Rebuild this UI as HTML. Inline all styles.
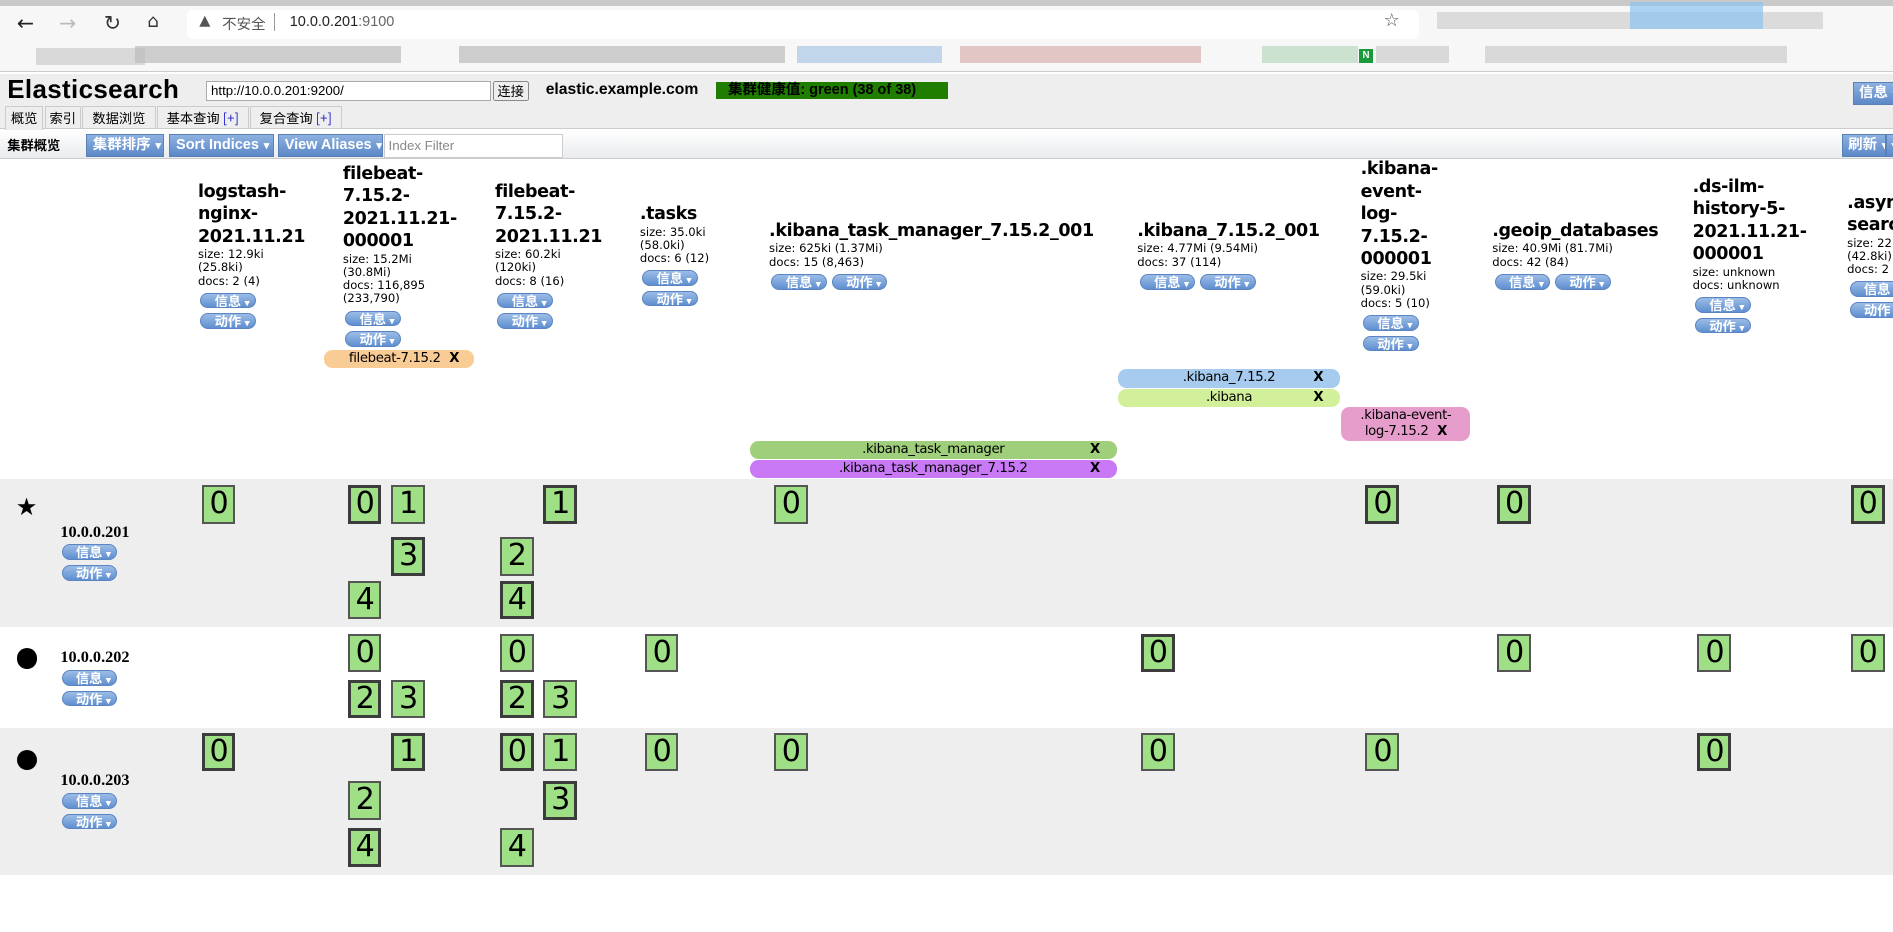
<!DOCTYPE html>
<html><head><meta charset="utf-8">
<style>
*{box-sizing:border-box;margin:0;padding:0}
html,body{width:1893px;height:932px;overflow:hidden;background:#fff}
#w{zoom:1.2073;width:1568px;height:772px;position:relative;font-family:"DejaVu Sans","Noto Sans CJK SC",sans-serif;color:#000}
.a{position:absolute}
.cjk{font-family:"Noto Sans CJK SC","WenQuanYi Zen Hei",sans-serif}
.pill{display:block;flex-shrink:0;width:46px;height:13px;border-radius:7px;background:linear-gradient(#9cbce6,#5f8fd0);border:1px solid #5a84c2;color:#fff;font:bold 11px/11px "Noto Sans CJK SC",sans-serif;padding-left:11px;margin:4px 0 0 2px;white-space:nowrap;overflow:hidden}
.pill:after{content:"▾";font-size:8px;margin-left:3px}
.tb{position:absolute;top:111px;height:19px;background:linear-gradient(#8eb1e0,#5b88c7);border:1px solid #5a80b8;color:#fff;font:bold 12px/17px "Liberation Sans","Noto Sans CJK SC",sans-serif;padding:0 5px;white-space:nowrap;overflow:hidden}
.tb:after{content:"▾";font-size:9px;margin-left:4px}
.col{position:absolute;top:132px;height:158px;display:flex;flex-direction:column;justify-content:center;white-space:nowrap}
.col>*{flex-shrink:0}
.col h2{font:bold 14.5px/18.6px "DejaVu Sans",sans-serif;letter-spacing:-0.3px}
.col p{font:9.6px/11px "DejaVu Sans",sans-serif}
.row2{display:flex;gap:2px}
.row2 .pill{margin-left:2px}
.al{position:absolute;height:15px;border-radius:7px;font:11px/15px "DejaVu Sans",sans-serif;text-align:center;letter-spacing:-0.3px}
.al b{position:absolute;right:14px;top:0;font-weight:bold}
.s{position:absolute;width:28px;height:32px;background:#9fdf86;border:2px solid #555;font:25px/28px "DejaVu Sans",sans-serif;text-align:center;letter-spacing:-1px}
.p{border:3px solid #3c3c3c;line-height:26px}
.node{position:absolute;left:50px;font:bold 13.5px "Liberation Serif",serif}
.blur{position:absolute;height:14px;background:#ccc;opacity:.7}
.tab{position:absolute;top:88px;height:19px;border:1px solid #ccc;font:11px/18px "Noto Sans CJK SC",sans-serif;text-align:center}
</style></head><body><div id="w">
<div class="a" style="left:0;top:0;width:1568px;height:5px;background:#c9c9c9"></div>
<div class="a" style="left:0;top:5px;width:1568px;height:55px;background:#f7f7f7;border-bottom:1px solid #ccc"></div>
<div class="a" style="left:155px;top:8px;width:1020px;height:24px;background:#fff;border-radius:5px"></div>
<div class="a" style="left:14px;top:9px;font-size:17px;color:#222">←</div>
<div class="a" style="left:49px;top:9px;font-size:17px;color:#bbb">→</div>
<div class="a" style="left:86px;top:9px;font-size:17px;color:#333">↻</div>
<div class="a" style="left:122px;top:9px;font-size:15px;color:#333">⌂</div>
<div class="a" style="left:165px;top:11px;font-size:12px;color:#555">▲</div>
<div class="a cjk" style="left:184px;top:11px;font-size:12px;color:#555">不安全</div>
<div class="a" style="left:227px;top:11px;width:1px;height:15px;background:#999"></div>
<div class="a" style="left:240px;top:12px;font:12px 'Liberation Sans',sans-serif;color:#222">10.0.0.201<span style="color:#666">:9100</span></div>
<div class="a" style="left:1146px;top:8px;font-size:15px;color:#555">☆</div>
<div class="blur" style="left:30px;top:40px;width:90px"></div>
<div class="blur" style="left:112px;top:38px;width:220px;background:#bbb"></div>
<div class="blur" style="left:380px;top:38px;width:270px;background:#bbb"></div>
<div class="blur" style="left:660px;top:38px;width:120px;background:#aac6e6"></div>
<div class="blur" style="left:795px;top:38px;width:200px;background:#d8b0b0"></div>
<div class="blur" style="left:1045px;top:38px;width:80px;background:#b8d8c0"></div>
<div class="a" style="left:1126px;top:41px;width:11px;height:11px;background:#1a9a3a;color:#fff;font:bold 8px/11px sans-serif;text-align:center">N</div>
<div class="blur" style="left:1140px;top:38px;width:60px"></div>
<div class="blur" style="left:1230px;top:38px;width:250px"></div>
<div class="blur" style="left:1190px;top:10px;width:320px;background:#cfcfcf"></div>
<div class="blur" style="left:1350px;top:2px;width:110px;height:22px;background:#8cc4f0"></div>
<div class="a" style="left:0;top:61px;width:1568px;height:46px;background:#eee;border-bottom:1px solid #ccc"></div>
<div class="a" style="left:6px;top:63px;font:bold 21.5px 'Liberation Sans',sans-serif;letter-spacing:0.3px">Elasticsearch</div>
<div class="a" style="left:171px;top:67px;width:236px;height:17px;background:#fff;border:1px solid #aaa;font:11px/15px 'Liberation Sans',sans-serif;padding-left:3px">http://10.0.0.201:9200/</div>
<div class="a cjk" style="left:408px;top:67px;width:30px;height:17px;background:#eee;border:1px solid #888;border-radius:2px;font-size:11px;line-height:15px;text-align:center">连接</div>
<div class="a" style="left:452px;top:67px;font:bold 13px 'Liberation Sans',sans-serif">elastic.example.com</div>
<div class="a" style="left:593px;top:68px;width:192px;height:14px;background:#1f7d00;font:bold 12px/14px 'Liberation Sans','Noto Sans CJK SC',sans-serif;padding-left:10px;white-space:nowrap">集群健康值: green (38 of 38)</div>
<div class="tb" style="left:1535px;top:68px;width:40px;padding:0 4px">信息</div>
<div class="tab" style="left:4px;width:32px;height:20px;background:#eee;border-bottom:none">概览</div>
<div class="tab" style="left:37px;width:30px">索引</div>
<div class="tab" style="left:68px;width:61px">数据浏览</div>
<div class="tab" style="left:130px;width:76px">基本查询 <span style="color:#22c">[+]</span></div>
<div class="tab" style="left:207px;width:76px">复合查询 <span style="color:#22c">[+]</span></div>
<div class="a" style="left:0;top:108px;width:1568px;height:24px;background:linear-gradient(#fff,#e9ebee);border-bottom:1px solid #ccc"></div>
<div class="a cjk" style="left:6px;top:112px;font-weight:bold;font-size:11px">集群概览</div>
<div class="tb" style="left:71px;width:65px">集群排序</div>
<div class="tb" style="left:140px;width:87px">Sort Indices</div>
<div class="tb" style="left:230px;width:87px">View Aliases</div>
<div class="a" style="left:318px;top:111px;width:148px;height:20px;background:#fff;border:1px solid #ccc;font:11px/18px 'Liberation Sans',sans-serif;color:#888;padding-left:3px">Index Filter</div>
<div class="tb" style="left:1526px;width:36px;padding:0 4px">刷新</div>
<div class="tb" style="left:1562px;width:10px;padding:0"></div>
<div class="col" style="left:164px"><h2>logstash-<br>nginx-<br>2021.11.21</h2><p>size: 12.9ki<br>(25.8ki)<br>docs: 2 (4)</p><span class="pill">信息</span><span class="pill">动作</span></div>
<div class="col" style="left:284px"><h2>filebeat-<br>7.15.2-<br>2021.11.21-<br>000001</h2><p>size: 15.2Mi<br>(30.8Mi)<br>docs: 116,895<br>(233,790)</p><span class="pill">信息</span><span class="pill">动作</span></div>
<div class="col" style="left:410px"><h2>filebeat-<br>7.15.2-<br>2021.11.21</h2><p>size: 60.2ki<br>(120ki)<br>docs: 8 (16)</p><span class="pill">信息</span><span class="pill">动作</span></div>
<div class="col" style="left:530px"><h2>.tasks</h2><p>size: 35.0ki<br>(58.0ki)<br>docs: 6 (12)</p><span class="pill">信息</span><span class="pill">动作</span></div>
<div class="col" style="left:637px"><h2>.kibana_task_manager_7.15.2_001</h2><p>size: 625ki (1.37Mi)<br>docs: 15 (8,463)</p><div class="row2"><span class="pill">信息</span><span class="pill">动作</span></div></div>
<div class="col" style="left:942px"><h2>.kibana_7.15.2_001</h2><p>size: 4.77Mi (9.54Mi)<br>docs: 37 (114)</p><div class="row2"><span class="pill">信息</span><span class="pill">动作</span></div></div>
<div class="col" style="left:1127px"><h2>.kibana-<br>event-<br>log-<br>7.15.2-<br>000001</h2><p>size: 29.5ki<br>(59.0ki)<br>docs: 5 (10)</p><span class="pill">信息</span><span class="pill">动作</span></div>
<div class="col" style="left:1236px"><h2>.geoip_databases</h2><p>size: 40.9Mi (81.7Mi)<br>docs: 42 (84)</p><div class="row2"><span class="pill">信息</span><span class="pill">动作</span></div></div>
<div class="col" style="left:1402px"><h2>.ds-ilm-<br>history-5-<br>2021.11.21-<br>000001</h2><p>size: unknown<br>docs: unknown</p><span class="pill">信息</span><span class="pill">动作</span></div>
<div class="col" style="left:1530px"><h2>.async-<br>search</h2><p>size: 22<br>(42.8ki)<br>docs: 2</p><span class="pill">信息</span><span class="pill">动作</span></div>
<div class="al" style="left:268px;top:290px;width:125px;background:#f9cc96;text-align:left;padding-left:21px">filebeat-7.15.2 <b style="position:static;margin-left:4px">X</b></div>
<div class="al" style="left:926px;top:306px;width:184px;background:#a6cbef">.kibana_7.15.2<b>X</b></div>
<div class="al" style="left:926px;top:322px;width:184px;background:#d2ef9a">.kibana<b>X</b></div>
<div class="al" style="left:1111px;top:337px;width:107px;height:28px;background:#e79dcb;line-height:13px;padding-top:1px">.kibana-event-<br>log-7.15.2 <b style="position:static;margin-left:4px">X</b></div>
<div class="al" style="left:621px;top:365px;width:304px;background:#9fcf7a">.kibana_task_manager<b>X</b></div>
<div class="al" style="left:621px;top:381px;width:304px;background:#c979f6">.kibana_task_manager_7.15.2<b>X</b></div>
<div class="a" style="left:0;top:397px;width:1568px;height:122px;background:#eee"></div>
<div class="a" style="left:0;top:603px;width:1568px;height:122px;background:#eee"></div>
<div class="a" style="left:13px;top:408px;font-size:20px">★</div>
<div class="node" style="top:432px">10.0.0.201</div>
<div class="a" style="left:49px;top:447px"><span class="pill">信息</span><span class="pill">动作</span></div>
<div class="a" style="left:14px;top:537px;width:17px;height:17px;border-radius:50%;background:#000"></div>
<div class="node" style="top:536px">10.0.0.202</div>
<div class="a" style="left:49px;top:551px"><span class="pill">信息</span><span class="pill">动作</span></div>
<div class="a" style="left:14px;top:621px;width:17px;height:17px;border-radius:50%;background:#000"></div>
<div class="node" style="top:638px">10.0.0.203</div>
<div class="a" style="left:49px;top:653px"><span class="pill">信息</span><span class="pill">动作</span></div>
<div class="s" style="left:167px;top:402px">0</div>
<div class="s p" style="left:288px;top:402px">0</div>
<div class="s" style="left:324px;top:402px">1</div>
<div class="s p" style="left:324px;top:445px">3</div>
<div class="s" style="left:288px;top:481px">4</div>
<div class="s p" style="left:450px;top:402px">1</div>
<div class="s" style="left:414px;top:445px">2</div>
<div class="s p" style="left:414px;top:481px">4</div>
<div class="s" style="left:641px;top:402px">0</div>
<div class="s p" style="left:1131px;top:402px">0</div>
<div class="s p" style="left:1240px;top:402px">0</div>
<div class="s p" style="left:1533px;top:402px">0</div>
<div class="s" style="left:288px;top:525px">0</div>
<div class="s p" style="left:288px;top:563px">2</div>
<div class="s" style="left:324px;top:563px">3</div>
<div class="s" style="left:414px;top:525px">0</div>
<div class="s p" style="left:414px;top:563px">2</div>
<div class="s" style="left:450px;top:563px">3</div>
<div class="s" style="left:534px;top:525px">0</div>
<div class="s p" style="left:945px;top:525px">0</div>
<div class="s" style="left:1240px;top:525px">0</div>
<div class="s" style="left:1406px;top:525px">0</div>
<div class="s" style="left:1533px;top:525px">0</div>
<div class="s p" style="left:167px;top:607px">0</div>
<div class="s p" style="left:324px;top:607px">1</div>
<div class="s" style="left:288px;top:647px">2</div>
<div class="s p" style="left:288px;top:686px">4</div>
<div class="s p" style="left:414px;top:607px">0</div>
<div class="s" style="left:450px;top:607px">1</div>
<div class="s p" style="left:450px;top:647px">3</div>
<div class="s" style="left:414px;top:686px">4</div>
<div class="s" style="left:534px;top:607px">0</div>
<div class="s" style="left:641px;top:607px">0</div>
<div class="s" style="left:945px;top:607px">0</div>
<div class="s" style="left:1131px;top:607px">0</div>
<div class="s p" style="left:1406px;top:607px">0</div>
</div></body></html>
